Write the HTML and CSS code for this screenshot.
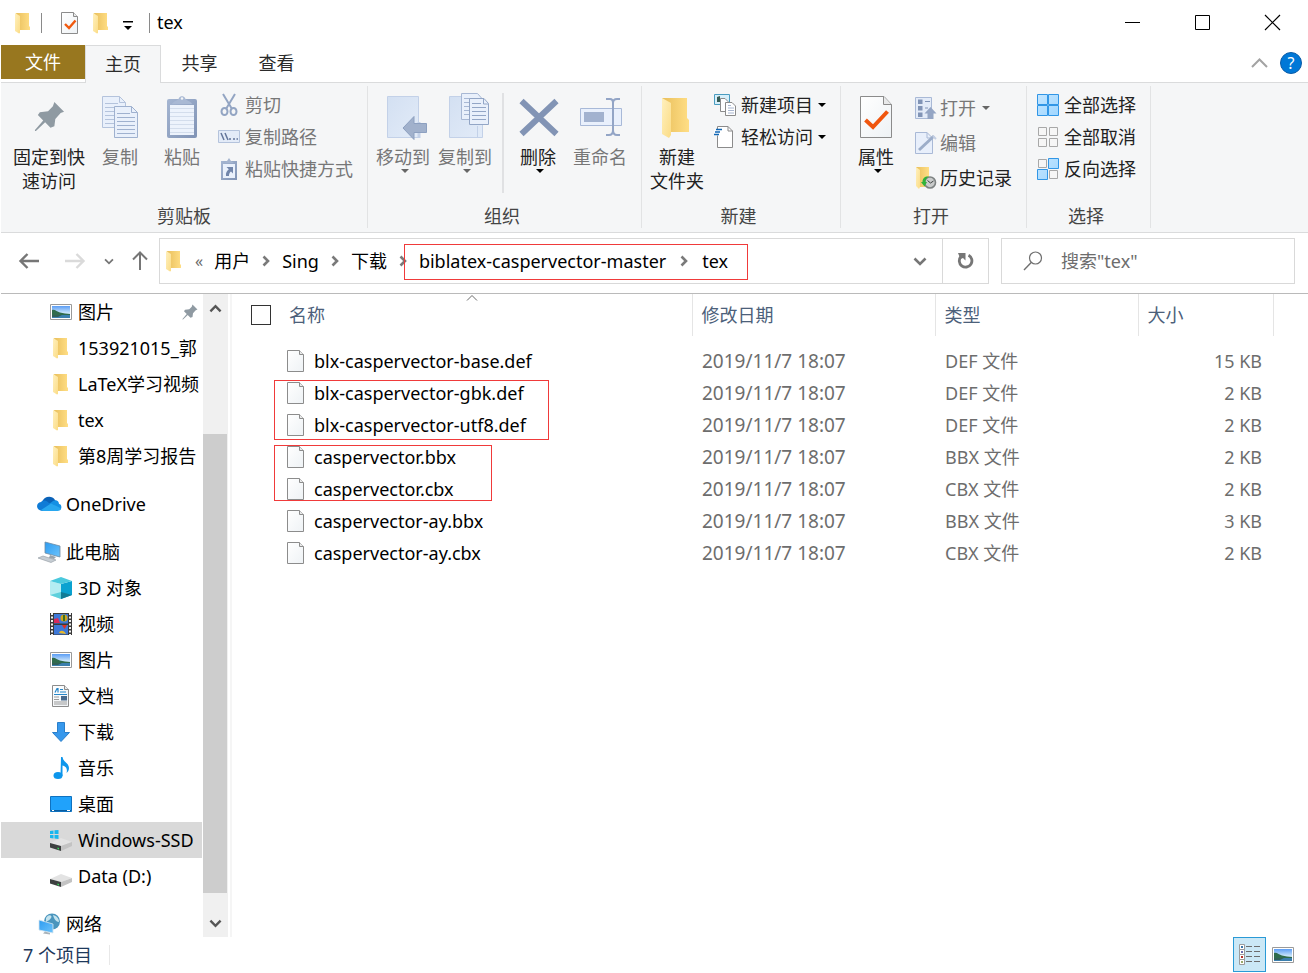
FILE: index.html
```
<!DOCTYPE html>
<html lang="zh-CN">
<head>
<meta charset="utf-8">
<meta name="viewport" content="width=device-width, initial-scale=1">
<title>tex</title>
<link rel="stylesheet" href="styles.css">
</head>
<body>
<svg class="defs" aria-hidden="true">
  <defs>
    <linearGradient id="g-fold" x1="0" y1="0" x2="1" y2="0"><stop offset="0" stop-color="#e9bf5c"/><stop offset="1" stop-color="#ffde85"/></linearGradient>
    <linearGradient id="g-flap" x1="0" y1="0" x2="1" y2="1"><stop offset="0" stop-color="#fff0bd"/><stop offset="1" stop-color="#fbdc86"/></linearGradient>
    <linearGradient id="g-sky" x1="0" y1="0" x2="0" y2="1"><stop offset="0" stop-color="#5b9df5"/><stop offset=".6" stop-color="#cfe8fb"/><stop offset="1" stop-color="#8fc0e0"/></linearGradient>
    <linearGradient id="g-page" x1="0" y1="0" x2="1" y2="1"><stop offset="0" stop-color="#ffffff"/><stop offset="1" stop-color="#eef2f5"/></linearGradient>
    <linearGradient id="g-clip" x1="0" y1="0" x2="1" y2="1"><stop offset="0" stop-color="#a5b6d2"/><stop offset="1" stop-color="#8093b5"/></linearGradient>
    <linearGradient id="g-blue" x1="0" y1="0" x2="1" y2="1"><stop offset="0" stop-color="#d3e0f2"/><stop offset="1" stop-color="#e2ebf8"/></linearGradient>
    <linearGradient id="g-tile" x1="0" y1="0" x2="1" y2="1"><stop offset="0" stop-color="#c4e6ff"/><stop offset="1" stop-color="#9fd6ff"/></linearGradient>
    <linearGradient id="g-screen" x1="0" y1="0" x2="1" y2="1"><stop offset="0" stop-color="#2d9bf0"/><stop offset="1" stop-color="#6cc3fb"/></linearGradient>
  </defs>
  <symbol id="folder" viewBox="0 0 15 22"><path d="M1 1H14V14L15 15V18H5Z" fill="url(#g-fold)"/><path d="M0 1 5 4V21L4 21.500 0 19Z" fill="url(#g-flap)"/></symbol>
  <symbol id="page" viewBox="0 0 18 22"><path d="M.5.500H12.500L16.500 4.500V21.500H.500Z" fill="url(#g-page)" stroke="#8c8c8c"/><path d="M12.500.500V4.500H16.500" fill="#e9eaea" stroke="#8c8c8c"/></symbol>
  <symbol id="picture" viewBox="0 0 22 16"><path d="M.5.500H21.500V15.500H.500Z" fill="#fff" stroke="#9a9a9a"/><path d="M2 2H20V14H2Z" fill="url(#g-sky)"/><path d="M2 6C5 5 7 8 10 8.500 13 9 17 10 20 10V11H2Z" fill="#2f6b4c"/><path d="M2 11H20V14H2Z" fill="#3b7fae"/><path d="M2 11H12L8 13H2Z" fill="#315f58"/></symbol>
  <symbol id="pin" viewBox="0 0 32 32"><path d="M21 1 31 11 27.500 12.500 22 18.500 21 26 17 27.500 11.500 22 2 31H1V30L9.500 20 4 14.500 6 11.500 14.500 10.500 19.500 5.500Z" fill="#8f9aa2"/></symbol>
  <symbol id="chev-down" viewBox="0 0 14 9"><path d="M1.500 1.500 7 7 12.500 1.500" fill="none" stroke="currentColor" stroke-width="2.600"/></symbol>
  <symbol id="chev-right" viewBox="0 0 8 12"><path d="M1.500 1.500 6 6 1.500 10.500" fill="none" stroke="currentColor" stroke-width="2.600"/></symbol>
  <symbol id="tri" viewBox="0 0 8 4"><path d="M0 0H8L4 4Z" fill="currentColor"/></symbol>
  <symbol id="drive" viewBox="0 0 22 13"><path d="M0 5 11 0 22 4 11 8Z" fill="#e3e3e3"/><path d="M0 5 11 8V13L0 9.500Z" fill="#3d4040"/><path d="M11 8 22 4V8L11 13Z" fill="#c3c3c3"/><path d="M7.500 9.500 9 10V11.500L7.500 11Z" fill="#37e05a"/></symbol>
</svg>

<header class="titlebar">
  <svg class="ic-folder" ><use href="#folder"/></svg>
  <span class="tb-sep"></span>
  <button class="plain tb-prop" aria-label="属性"><svg width="18" height="22"><use href="#page"/><path d="M4 12 8 16 14.500 8.500" fill="none" stroke="#f0590e" stroke-width="2.400"/></svg></button>
  <button class="plain tb-new" aria-label="新建文件夹"><svg class="ic-folder"><use href="#folder"/></svg></button>
  <button class="plain tb-menu" aria-label="自定义快速访问工具栏"><svg width="10" height="9" viewBox="0 0 10 9"><path d="M0 0H10V1.500H0ZM1 5H9L5 9Z"/></svg></button>
  <span class="tb-sep"></span>
  <h1 class="title">tex</h1>
  <div class="wincontrols">
    <button class="plain" aria-label="最小化"><svg width="15" height="15"><path d="M0 7.500H15" stroke="#000"/></svg></button>
    <button class="plain" aria-label="最大化"><svg width="15" height="15"><path d="M.5.500H14.500V14.500H.500Z" fill="none" stroke="#000"/></svg></button>
    <button class="plain" aria-label="关闭"><svg width="15" height="15"><path d="M0 0 15 15M15 0 0 15" stroke="#000" stroke-width="1.200"/></svg></button>
  </div>
</header>

<nav class="tabs">
  <button class="tab tab-file">文件</button>
  <button class="tab tab-on">主页</button>
  <button class="tab">共享</button>
  <button class="tab">查看</button>
  <div class="tabs-end">
    <button class="plain" aria-label="最小化功能区"><svg width="17" height="10" viewBox="0 0 17 10"><path d="M1 9 8.500 1.500 16 9" fill="none" stroke="#a3a3a3" stroke-width="2"/></svg></button>
    <button class="help" aria-label="帮助">?</button>
  </div>
</nav>

<section class="ribbon">
  <div class="group">
    <div class="group-body">
      <button class="big"><svg class="big-ic" viewBox="0 0 42 42"><use href="#pin" x="6" y="5" width="31" height="31"/></svg><span>固定到快<br>速访问</span></button>
      <button class="big off"><svg class="big-ic" viewBox="0 0 42 42"><g fill="#e9f0fb" stroke="#b4c3dc"><path d="M3.500.500H20.500L26.500 6.500V31.500H3.500Z"/><path d="M20.500.500V6.500H26.500M6 7.500H19M6 11.500H15M6 15.500H15M6 19.500H15M6 23.500H15M6 27.500H15" fill="none"/></g><g fill="#e9f0fb" stroke="#9fb1cf"><path d="M15.500 10.500H32.500L38.500 16.500V41.500H15.500Z"/><path d="M32.500 10.500V16.500H38.500M18 17.500H31M18 21.500H36M18 25.500H36M18 29.500H36M18 33.500H36M18 37.500H36" fill="none"/></g></svg><span>复制</span></button>
      <button class="big off"><svg class="big-ic" viewBox="0 0 42 42"><rect x="6" y="3" width="30" height="39" rx="2" fill="url(#g-clip)"/><path d="M9 9H33V39H9Z" fill="#edf3fc"/><path d="M9 12.500H33M9 16.500H33M9 20.500H33M9 24.500H33M9 28.500H33M9 32.500H33M9 36.500H33" stroke="#d3ddec"/><path d="M11 8C12 5 17 5 18 2 19-.500 23-.500 24 2 25 5 30 5 31 8Z" fill="#a9b9d4"/><circle cx="21" cy="2.500" r="1.200" fill="#f5f6f7"/></svg><span>粘贴</span></button>
      <div class="smalls">
        <button class="small off"><svg class="ic" viewBox="0 0 22 22"><g fill="none" stroke="#93a5c3"><path d="M5 0 14 15M17 0 8 15" stroke-width="2"/><ellipse cx="6.500" cy="17.500" rx="3" ry="3.500" stroke-width="2"/><ellipse cx="15.500" cy="17.500" rx="3" ry="3.500" stroke-width="2"/></g></svg>剪切</button>
        <button class="small off"><svg class="ic" viewBox="0 0 22 22"><path d="M.5 4.500H21.500V16.500H.500Z" fill="#e3ebf8" stroke="#b4c3dc"/><path d="M3 7 6 14M7 7 10 14M11 13H13M15 13H17M18.500 13H20" stroke="#63759a" stroke-width="1.500"/></svg>复制路径</button>
        <button class="small off"><svg class="ic" viewBox="0 0 22 22"><path d="M3 3H19V22H3Z" fill="url(#g-clip)"/><path d="M5 6H17V20H5Z" fill="#eaf1fc"/><path d="M6 5 9 3 11 0 13 3 16 5Z" fill="#a5b5d0"/><path d="M8.500 9H15V15.500L13 13.500C11.500 14.500 11 16 11 18H8C7.500 15 9 12.500 10.800 11.300Z" fill="#7286ab"/></svg>粘贴快捷方式</button>
      </div>
    </div>
    <div class="group-name">剪贴板</div>
  </div>

  <div class="group g-org">
    <div class="group-body">
      <button class="big off"><svg class="big-ic" viewBox="0 0 42 42"><path d="M5.500.500H36.500V41.500H5.500Z" fill="url(#g-blue)" stroke="#c3d1e8"/><path d="M37 26V42" stroke="#c3d1e8" stroke-width="3"/><path d="M21 32 32 20.500V27.500H44.500V36.500H32V43.500Z" fill="#a1b1cc" stroke="#8da0c0"/></svg><span>移动到</span><svg class="tri"><use href="#tri"/></svg></button>
      <button class="big off"><svg class="big-ic" viewBox="0 0 42 42"><path d="M5.500.500H33.500L38.500 29V41.500H5.500Z" fill="url(#g-blue)" stroke="#c3d1e8"/><path d="M33.500 30V41.500" stroke="#c3d1e8"/><g fill="#e9f0fb" stroke="#a8b8d4"><path d="M17.500-2.500H33.500L37.500 2V23.500H17.500Z"/><path d="M20 2.500H31M20 6.500H25M20 10.500H25M20 14.500H25M20 18.500H25"/><path d="M25.500 2.500H40L44.500 7.500V28.500H25.500Z" stroke="#93a6c6"/><path d="M39.500 3V8H44.500M28 7.500H37M28 11.500H42M28 15.500H42M28 19.500H42M28 23.500H42" fill="none" stroke="#93a6c6"/></g></svg><span>复制到</span><svg class="tri"><use href="#tri"/></svg></button>
      <span class="inner-sep"></span>
      <button class="big"><svg class="big-ic" viewBox="0 0 42 42"><path d="M4.500 5 39.500 38M39.500 5 4.500 38" stroke="#8294b5" stroke-width="6"/></svg><span>删除</span><svg class="tri"><use href="#tri"/></svg></button>
      <button class="big off"><svg class="big-ic" viewBox="0 0 42 42"><path d="M1.500 12.500H42.500V29.500H1.500Z" fill="#e9f0fc" stroke="#a8b9d8"/><path d="M5 16H25V26H5Z" fill="#a2b2cf"/><path d="M27 3H31C33 3 34 5 34 7V34C34 37 33 39 30 39H27M41 3H38C35 3 34 5 34 7M34 34C34 37 35 39 38 39H41" fill="none" stroke="#93a5c6" stroke-width="2"/></svg><span>重命名</span></button>
    </div>
    <div class="group-name">组织</div>
  </div>

  <div class="group g-new">
    <div class="group-body">
      <button class="big"><svg class="big-ic" viewBox="0 0 42 42"><path d="M6 2H31V22L33 24V36H15Z" fill="url(#g-fold)"/><path d="M6 2 15 7V39L13 42 6 38Z" fill="url(#g-flap)"/></svg><span>新建<br>文件夹</span></button>
      <div class="smalls">
        <button class="small"><svg class="ic" viewBox="0 0 22 22"><path d="M.5.500H15.500V10.500H.500Z" fill="#d7effa" stroke="#4a9cc0"/><path d="M3 3 6 2V8H3Z" fill="#355b54"/><path d="M6.500 4.500H11L14 7.500V17.500H6.500Z" fill="#fff" stroke="#8b8b8b"/><path d="M11.500 8.500H18L21.500 12V21.500H11.500Z" fill="#fff" stroke="#8b8b8b"/><path d="M14 11.500H17M14 14H20M14 16.500H20M14 19H20" stroke="#a9b6d0"/></svg>新建项目<svg class="tri"><use href="#tri"/></svg></button>
        <button class="small"><svg class="ic" viewBox="0 0 22 22"><path d="M3.500.500H14L18.500 5V21.500H3.500Z" fill="#fff" stroke="#8b8b8b"/><path d="M14 .500V5H18.500" fill="none" stroke="#8b8b8b"/><path d="M0 3.500H7V9.500H0Z" fill="#fff"/><path d="M2 3.500H8M1 6H6M0 8.500H5" stroke="#1267b5" stroke-width="1.500"/></svg>轻松访问<svg class="tri"><use href="#tri"/></svg></button>
      </div>
    </div>
    <div class="group-name">新建</div>
  </div>

  <div class="group g-open">
    <div class="group-body">
      <button class="big"><svg class="big-ic" viewBox="0 0 42 42"><path d="M5.500.500H29L36.500 8.500V41.500H5.500Z" fill="url(#g-page)" stroke="#8b8b8b"/><path d="M28.500.500V8.500H36.500" fill="#e8e9ea" stroke="#8b8b8b"/><path d="M10.500 24 18 31 32.500 15.500" fill="none" stroke="#f0560f" stroke-width="4"/></svg><span>属性</span><svg class="tri"><use href="#tri"/></svg></button>
      <div class="smalls">
        <button class="small off"><svg class="ic" viewBox="0 0 22 22"><path d="M.5.500H16.500V21.500H.500Z" fill="#e3ebf8" stroke="#a9b9d6"/><path d="M3 2.500H7.500V7H3ZM3 9H7.500V13.500H3ZM3 15.500H7.500V20H3Z" fill="#8194b6"/><path d="M10 4.500H15M10 11H13" stroke="#8194b6"/><path d="M15.500 10 21.500 16.500H18.500V22H12.500V16.500H9.500Z" fill="#94a5c4"/></svg>打开<svg class="tri"><use href="#tri"/></svg></button>
        <button class="small off"><svg class="ic" viewBox="0 0 22 22"><path d="M.5.500H12L17.500 6V21.500H.500Z" fill="#e8effb" stroke="#a9b9d6"/><path d="M12 .500V6H17" fill="none" stroke="#a9b9d6"/><path d="M4 18 19 4" stroke="#9cadc9" stroke-width="3"/><path d="M18 4 21 7" stroke="#c4cfe2" stroke-width="2"/></svg>编辑</button>
        <button class="small"><svg class="ic" viewBox="0 0 22 22"><path d="M1 0H14V20H4Z" fill="url(#g-fold)"/><path d="M1 0 5 3V20L4 22 1 19Z" fill="url(#g-flap)"/><circle cx="15" cy="15.500" r="5.500" fill="#c9cbcb" stroke="#7d8282" stroke-width="1.600"/><path d="M12.500 13.500 15.500 16 18.500 14" fill="none" stroke="#3e4343"/><path d="M6 15 9.500 19.500 12 15H10.500C10.500 12 12 10.500 14 9.500 10 9 7.500 11 7.500 15Z" fill="#2fb33a"/></svg>历史记录</button>
      </div>
    </div>
    <div class="group-name">打开</div>
  </div>

  <div class="group g-select">
    <div class="group-body">
      <div class="smalls">
        <button class="small"><svg class="ic" viewBox="0 0 22 22"><path d="M.5.500H10.500V10.500H.500ZM11.500.500H21.500V10.500H11.500ZM.5 11.500H10.500V21.500H.500ZM11.500 11.500H21.500V21.500H11.500Z" fill="url(#g-tile)" stroke="#3196e6"/></svg>全部选择</button>
        <button class="small"><svg class="ic" viewBox="0 0 22 22"><path d="M1.500 1.500H9.500V9.500H1.500ZM12.500 1.500H20.500V9.500H12.500ZM1.500 12.500H9.500V20.500H1.500ZM12.500 12.500H20.500V20.500H12.500Z" fill="#f6f6f6" stroke="#a8a8a8"/></svg>全部取消</button>
        <button class="small"><svg class="ic" viewBox="0 0 22 22"><path d="M1.500 1.500H9.500V9.500H1.500ZM12.500 12.500H20.500V20.500H12.500Z" fill="#f6f6f6" stroke="#a8a8a8"/><path d="M11.500.500H21.500V10.500H11.500ZM.5 11.500H10.500V21.500H.500Z" fill="url(#g-tile)" stroke="#3196e6"/></svg>反向选择</button>
      </div>
    </div>
    <div class="group-name">选择</div>
  </div>
</section>

<section class="addressbar">
  <div class="navbtns">
    <button class="plain" aria-label="后退"><svg width="20" height="16"><path d="M1 8H20M8.500 1 1.500 8 8.500 15" fill="none" stroke="#767676" stroke-width="2.400"/></svg></button>
    <button class="plain" aria-label="前进"><svg width="20" height="16"><path d="M0 8H19M11.500 1 18.500 8 11.500 15" fill="none" stroke="#dadada" stroke-width="2.400"/></svg></button>
    <button class="plain nav-recent" aria-label="最近浏览的位置"><svg width="10" height="7"><use href="#chev-down"/></svg></button>
    <button class="plain" aria-label="上移"><svg width="16" height="20"><path d="M8 1V19M1 8.500 8 1.500 15 8.500" fill="none" stroke="#767676" stroke-width="2"/></svg></button>
  </div>
  <div class="path">
    <svg class="ic-folder"><use href="#folder"/></svg>
    <span class="more">«</span>
    <button class="plain crumb">用户</button>
    <svg class="cr"><use href="#chev-right"/></svg>
    <button class="plain crumb">Sing</button>
    <svg class="cr"><use href="#chev-right"/></svg>
    <button class="plain crumb">下载</button>
    <svg class="cr"><use href="#chev-right"/></svg>
    <span class="marked-path">
      <button class="plain crumb">biblatex-caspervector-master</button>
      <svg class="cr"><use href="#chev-right"/></svg>
      <button class="plain crumb">tex</button>
    </span>
    <button class="plain path-drop" aria-label="以前的位置"><svg width="14" height="9"><use href="#chev-down"/></svg></button>
    <button class="plain path-refresh" aria-label="刷新"><svg width="18" height="18" viewBox="0 0 18 18"><path d="M11.500 3.200A6.300 6.300 0 1 1 4 4.500" fill="none" stroke="#767676" stroke-width="2.800"/><path d="M1 1H8.500V8.500L6 6 3.500 7Z" fill="#767676"/></svg></button>
  </div>
  <label class="search">
    <svg width="20" height="20" viewBox="0 0 20 20"><circle cx="12.500" cy="7" r="6" fill="none" stroke="#6f6f6f" stroke-width="1.200"/><path d="M8.200 11.500 1 19" stroke="#6f6f6f" stroke-width="1.400"/></svg>
    <input type="text" placeholder='搜索"tex"' aria-label="搜索">
  </label>
</section>

<main class="content">
  <nav class="tree">
    <ul>
      <li><a href="#"><svg class="ic" viewBox="0 0 22 22"><use href="#picture" y="3" width="22" height="16"/></svg>图片<svg class="pinned"><use href="#pin"/></svg></a></li>
      <li><a href="#"><svg class="ic" viewBox="0 0 22 22"><use href="#folder" x="3" width="15" height="22"/></svg>153921015_郭</a></li>
      <li><a href="#"><svg class="ic" viewBox="0 0 22 22"><use href="#folder" x="3" width="15" height="22"/></svg>LaTeX学习视频</a></li>
      <li><a href="#"><svg class="ic" viewBox="0 0 22 22"><use href="#folder" x="3" width="15" height="22"/></svg>tex</a></li>
      <li><a href="#"><svg class="ic" viewBox="0 0 22 22"><use href="#folder" x="3" width="15" height="22"/></svg>第8周学习报告</a></li>
      <li class="root"><a href="#"><svg class="ic" viewBox="0 0 22 22"><path d="M4 9C6 3 14 2 17 7L20 12 8 17Z" fill="#0a62b8"/><path d="M5 18C-2 18-3 10 3 9 6 6 9 8 11 10L18 14 14 18Z" fill="#0f7bd6"/><path d="M15 8C18 6 21 8 21 11 24 11 24 16 22 17L11 11Z" fill="#1490e4"/><path d="M3 17 13 10.500C15 12 22 14 23 16 22 18 20 18 18 18H5Z" fill="#28a7ef"/></svg>OneDrive</a></li>
      <li class="root"><a href="#"><svg class="ic" viewBox="0 0 22 22"><path d="M7 1 22 5V16L7 12Z" fill="url(#g-screen)" stroke="#6f8aa2" stroke-width=".8"/><path d="M12 14 18 16 16 18 11 17Z" fill="#9aa4ac"/><path d="M0 17 5 15 18 19 13 21.500Z" fill="#c6cdd3" stroke="#8e979f" stroke-width=".6"/></svg>此电脑</a></li>
      <li><a href="#"><svg class="ic" viewBox="0 0 22 22"><path d="M0 4 11 7V22L0 18Z" fill="#b5edf2"/><path d="M11 7 22 4V18L11 22Z" fill="#0aa2d0"/><path d="M0 4 11 0 22 4 11 7Z" fill="#4ac9dd"/><path d="M0 18 11 15V22Z" fill="#5ed0dc"/><path d="M11 15 22 18 11 22Z" fill="#117c95"/></svg>3D 对象</a></li>
      <li><a href="#"><svg class="ic" viewBox="0 0 22 22"><path d="M0 0H22V22H0Z" fill="#3a3a3a"/><path d="M4 1H18V10.500H4ZM4 12H18V21.500H4Z" fill="#3d78d8"/><path d="M2 0V22M20 0V22" stroke="#f2f2f2" stroke-width="2" stroke-dasharray="2 1.500"/><circle cx="14" cy="5" r="3.500" fill="#d2a51b"/><path d="M13 2H15V8H13Z" fill="#396f28"/><path d="M4 6 8 5 10 10H4Z" fill="#d62b5d"/><path d="M12 12H17L14.500 16Z" fill="#df3023"/><path d="M9 20C10 17 14 17 16 21Z" fill="#e8b82a"/></svg>视频</a></li>
      <li><a href="#"><svg class="ic" viewBox="0 0 22 22"><use href="#picture" y="3" width="22" height="16"/></svg>图片</a></li>
      <li><a href="#"><svg class="ic" viewBox="0 0 22 22"><use href="#page" x="2" width="18" height="22"/><path d="M5 7.500 7 3.500H8L8 7.500M10 4.500H13M10 7H16M4 9.500H17" fill="none" stroke="#2787c9" stroke-width="1.200"/><path d="M4 12H9M4 14.500H9M4 17H17M4 19H17" stroke="#9b9b9b"/><path d="M11 11H17V15.500H11Z" fill="#47698c"/></svg>文档</a></li>
      <li><a href="#"><svg class="ic" viewBox="0 0 22 22"><path d="M7.500 1.500H14.500V11.500H19.500L11 20.500 2.500 11.500H7.500Z" fill="#3798ec" stroke="#2a7fcb"/></svg>下载</a></li>
      <li><a href="#"><svg class="ic" viewBox="0 0 22 22"><ellipse cx="8" cy="18.500" rx="4.500" ry="3.500" fill="#0d96ec"/><path d="M11 0H12.500C13 5 19 6 19 11 19 13 18 15 16.500 16 18 11 15 9 12.500 8.500V19H10.500Z" fill="#0d96ec"/></svg>音乐</a></li>
      <li><a href="#"><svg class="ic" viewBox="0 0 22 22"><path d="M.5 3.500H21.500V18.500H.500Z" fill="#20a2fb" stroke="#0f72c0"/><path d="M1 17.500H21" stroke="#0b5c9e"/><path d="M2 17.500H4M17 17.500H20" stroke="#fff"/></svg>桌面</a></li>
      <li><a href="#" aria-current="true"><svg class="ic" viewBox="0 0 22 22"><use href="#drive" y="9" width="22" height="13"/><path d="M0 2 3.500 1.500V5H0ZM4.500 1.300 8.500 1V5H4.500ZM0 6H3.500V9.500L0 9ZM4.500 6H8.500V10L4.500 9.500Z" fill="#17b6ee"/></svg>Windows-SSD</a></li>
      <li><a href="#"><svg class="ic" viewBox="0 0 22 22"><use href="#drive" y="9" width="22" height="13"/></svg>Data (D:)</a></li>
      <li class="root"><a href="#"><svg class="ic" viewBox="0 0 22 22"><circle cx="14" cy="8.500" r="8" fill="#4a95bd"/><path d="M8 5C11 0 15 3 13 5 11 8 9 8 8 9ZM15 2C19 3 21 6 21 9 18 9 16 6 15 2Z" fill="#c4e3ee"/><path d="M1 7 15 11V20L1 17Z" fill="url(#g-screen)" stroke="#d5e5ef" stroke-width=".8"/><path d="M7 18.500 12 20V21.500L5 20.500Z" fill="#aab4bb"/></svg>网络</a></li>
    </ul>
  </nav>
  <div class="scroll">
    <button class="plain" aria-label="向上滚动"><svg width="13" height="9" viewBox="0 0 14 9"><path d="M1.500 7.500 7 2 12.500 7.500" fill="none" stroke="currentColor" stroke-width="2.600"/></svg></button>
    <div class="track"><div class="thumb"></div></div>
    <button class="plain" aria-label="向下滚动"><svg width="13" height="9"><use href="#chev-down"/></svg></button>
  </div>
  <section class="files">
    <table>
      <colgroup><col class="c-name"><col class="c-date"><col class="c-type"><col class="c-size"><col></colgroup>
      <thead>
        <tr>
          <th><span class="name-head"><input type="checkbox" aria-label="全选">名称</span><svg class="sort" width="12" height="6" viewBox="0 0 12 6"><path d="M1 5.500 6 .500 11 5.500" fill="none" stroke="#6a6a6a"/></svg></th>
          <th>修改日期</th><th>类型</th><th>大小</th><td></td>
        </tr>
      </thead>
      <tbody>
        <tr><td><span class="fname"><svg class="ic-page"><use href="#page"/></svg>blx-caspervector-base.def</span></td><td>2019/11/7 18:07</td><td>DEF 文件</td><td>15 KB</td><td></td></tr>
        <tr><td><span class="fname"><svg class="ic-page"><use href="#page"/></svg>blx-caspervector-gbk.def</span></td><td>2019/11/7 18:07</td><td>DEF 文件</td><td>2 KB</td><td></td></tr>
        <tr><td><span class="fname"><svg class="ic-page"><use href="#page"/></svg>blx-caspervector-utf8.def</span></td><td>2019/11/7 18:07</td><td>DEF 文件</td><td>2 KB</td><td></td></tr>
        <tr><td><span class="fname"><svg class="ic-page"><use href="#page"/></svg>caspervector.bbx</span></td><td>2019/11/7 18:07</td><td>BBX 文件</td><td>2 KB</td><td></td></tr>
        <tr><td><span class="fname"><svg class="ic-page"><use href="#page"/></svg>caspervector.cbx</span></td><td>2019/11/7 18:07</td><td>CBX 文件</td><td>2 KB</td><td></td></tr>
        <tr><td><span class="fname"><svg class="ic-page"><use href="#page"/></svg>caspervector-ay.bbx</span></td><td>2019/11/7 18:07</td><td>BBX 文件</td><td>3 KB</td><td></td></tr>
        <tr><td><span class="fname"><svg class="ic-page"><use href="#page"/></svg>caspervector-ay.cbx</span></td><td>2019/11/7 18:07</td><td>CBX 文件</td><td>2 KB</td><td></td></tr>
      </tbody>
    </table>
    <div class="mark mark-def"></div>
    <div class="mark mark-bx"></div>
  </section>
</main>

<footer class="status">
  <span class="count">7 个项目</span>
  <div class="views">
    <button class="view view-on" aria-label="详细信息"><svg width="22" height="22" viewBox="0 0 22 22"><path d="M.5.500H5.500V5.500H.500ZM.5 5.500H5.500V10.500H.500ZM.5 10.500H5.500V15.500H.500ZM.5 15.500H5.500V20.500H.500Z" fill="#fff" stroke="#9b9b9b"/><path d="M2 2H4V4H2Z" fill="#3a76a8"/><path d="M2 7H4V9H2Z" fill="#6b6fb0"/><path d="M2 12H4V14H2Z" fill="#b8302a"/><path d="M2 17H4V19H2Z" fill="#9bab6a"/><path d="M7 2.500H13M15 2.500H21M7 7.500H13M15 7.500H21M7 12.500H13M15 12.500H21M7 17.500H13M15 17.500H21" stroke="#6d6d6d"/></svg></button>
    <button class="view" aria-label="大缩略图"><svg width="22" height="16"><use href="#picture"/></svg></button>
  </div>
</footer>
</body>
</html>
```
FILE: styles.css
```
* { box-sizing: border-box; }

html, body { height: 100%; }

body {
  margin: 0;
  display: flex;
  flex-direction: column;
  padding-left: 1px;
  background: #fff;
  color: #000;
  font: 18px/24px "Noto Sans", "Noto Sans CJK SC", sans-serif;
  overflow: hidden;
}

button, input { font: inherit; color: inherit; }
button, a { white-space: nowrap; }
svg { display: block; flex: none; overflow: visible; }
.defs { position: absolute; width: 0; height: 0; }

.plain {
  display: flex;
  align-items: center;
  justify-content: center;
  padding: 0;
  border: 0;
  background: none;
}

.ic { width: 22px; height: 22px; }
.ic-folder { width: 15px; height: 22px; }
.ic-page { width: 18px; height: 22px; }

/* Title bar */
.titlebar {
  display: flex;
  align-items: center;
  flex: none;
  height: 45px;
  padding: 0 1px 0 14px;
}
.tb-sep { width: 1px; height: 20px; margin-left: 11px; background: #8a8a8a; }
.tb-prop { margin-left: 19px; }
.tb-new { margin-left: 14px; }
.tb-menu { margin: 6px 5px 0 15px; }
.title { margin: 0 0 2px 7px; font-size: 18px; font-weight: 400; }
.wincontrols { display: flex; margin-left: auto; }
.wincontrols .plain { width: 70px; height: 44px; }

/* Tabs */
.tabs {
  display: flex;
  flex: none;
  height: 38px;
  border-bottom: 1px solid #dadbdc;
}
.tab {
  width: 77px;
  height: 36px;
  padding: 0;
  border: 0;
  background: none;
  color: #2b2b2b;
}
.tab-file { width: 84px; height: 34px; background: #98771f; color: #fff; }
.tab-on {
  width: 76px;
  height: 38px;
  padding-bottom: 2px;
  border: 1px solid #dadbdc;
  border-bottom: 0;
  background: #f5f6f7;
}
.tabs-end {
  display: flex;
  align-items: center;
  gap: 12px;
  margin-left: auto;
  padding: 0 6px 1px 0;
}
.help {
  width: 22px;
  height: 22px;
  padding: 0;
  border: 1px solid #0a5ca8;
  border-radius: 50%;
  background: #0078d7;
  color: #fff;
  font-size: 16px;
  line-height: 20px;
}

/* Ribbon */
.ribbon {
  display: flex;
  flex: none;
  height: 150px;
  padding: 3px 0 4px;
  border-bottom: 1px solid #dadbdc;
  background: #f5f6f7;
}
.group {
  display: flex;
  flex-direction: column;
  border-right: 1px solid #e2e3e4;
}
.group-body {
  display: flex;
  flex: 1;
  align-items: flex-start;
  padding: 0 14px 0 8px;
}
.g-org .group-body { padding: 0 10px 0 4px; }
.g-new .group-body, .g-open .group-body { padding-left: 4px; }
.g-select .group-body { padding-left: 5px; }
.group-name { text-align: center; color: #444; }
.group + .group .group-name { padding-right: 5px; }

.big {
  display: flex;
  flex-direction: column;
  align-items: center;
  min-width: 62px;
  padding: 10px 4px 0;
  border: 0;
  background: none;
  color: #222;
}
.big-ic { width: 42px; height: 42px; margin-bottom: 7px; }
.tri { width: 8px; height: 4px; color: #000; }
.big .tri { margin-left: 4px; }
.off { color: #777; }
.off .tri { color: #666; }

.smalls { display: flex; flex-direction: column; padding: 3px 0 0 5px; }
.small {
  display: flex;
  align-items: center;
  gap: 5px;
  height: 32px;
  padding: 0;
  border: 0;
  background: none;
  color: #222;
}
.small.off { color: #777; }
.g-new .smalls { padding-left: 6px; }
.g-open .smalls { padding: 4px 0 0 8px; }
.g-open .small { gap: 3px; height: 35px; }
.g-open .small .tri { margin-left: 3px; }

.inner-sep { width: 2px; height: 100px; margin: 7px 3px 0 6px; background: #e0e1e3; }

/* Address bar */
.addressbar {
  display: flex;
  align-items: center;
  flex: none;
  height: 61px;
  padding: 0 13px 4px 18px;
  border-bottom: 1px solid #bababa;
}
.navbtns { display: flex; align-items: center; gap: 18px; padding-right: 9px; }
.navbtns .plain { min-width: 20px; height: 44px; }
.navbtns .plain:first-child { margin-right: 8px; }
.navbtns .nav-recent { min-width: 12px; margin-right: -3px; color: #767676; }
.path, .search { display: flex; align-items: center; height: 46px; border: 1px solid #d9d9d9; }
.path { flex: 1; padding-left: 6px; }
.more { margin: 0 11px 0 14px; color: #6a6a6a; font-size: 16px; }
.cr { width: 8px; height: 12px; margin: 0 12px; color: #7a7a7a; }
.marked-path { position: relative; display: flex; align-items: center; gap: 2px; }
.marked-path::after {
  content: "";
  position: absolute;
  inset: -5px -20px -7px -15px;
  border: 1px solid #f03a3a;
  pointer-events: none;
}
.path-drop { width: 44px; height: 44px; margin-left: auto; color: #767676; }
.path-refresh { width: 46px; height: 44px; border-left: 1px solid #d9d9d9; }
.search { width: 294px; min-width: 0; margin-left: 12px; padding-left: 21px; }
.search input {
  flex: 1 1 0;
  width: 0;
  min-width: 0;
  margin-left: 18px;
  padding: 0;
  border: 0;
  outline: 0;
  background: none;
}
.search input::placeholder { color: #6d6d6d; opacity: 1; }

/* Navigation tree */
.content { display: flex; flex: 1; min-height: 0; }
.tree { flex: none; width: 201px; overflow: hidden; }
.tree ul { margin: 0; padding: 0; list-style: none; }
.tree a {
  display: flex;
  align-items: center;
  gap: 6px;
  height: 36px;
  padding: 0 10px 0 49px;
  color: #000;
  text-decoration: none;
}
.tree .root a { padding-left: 37px; }
.tree .root { margin-top: 12px; }
.tree a[aria-current] { background: #d9d9d9; }
.pinned { width: 16px; height: 16px; margin: 0 -6px 0 auto; }

.scroll {
  display: flex;
  flex-direction: column;
  flex: none;
  width: 25px;
  margin-left: 1px;
  background: #f0f0f0;
  color: #555;
}
.scroll .plain { height: 28px; }
.track { flex: 1; padding: 112px 1px 16px 0; }
.thumb { height: 100%; background: #cdcdcd; }

/* File list */
.files {
  position: relative;
  flex: 1;
  margin-left: 2px;
  border-left: 2px solid #f5f5f5;
}
.files table { width: 100%; border-collapse: collapse; table-layout: fixed; }
.c-name { width: 460px; }
.c-date { width: 243px; }
.c-type { width: 203px; }
.c-size { width: 135px; }
.files th {
  position: relative;
  height: 42px;
  padding: 0 9px 1px;
  border-right: 1px solid #e5e5e5;
  color: #4c607a;
  font-weight: 400;
  text-align: left;
}
.name-head { display: flex; align-items: center; gap: 18px; padding-left: 10px; }
.name-head input {
  appearance: none;
  width: 20px;
  height: 20px;
  margin: 0;
  border: 1px solid #333;
  background: #fff;
}
.sort { position: absolute; top: 1px; left: 51%; }
.files tbody::before { content: ""; display: block; height: 9px; }
.files tbody td { height: 32px; padding: 0 10px; color: #6d6d6d; }
.files tbody td:nth-child(2) { font-size: 19px; }
.files tbody td:nth-child(4) { padding-right: 11px; text-align: right; }
.fname { display: flex; align-items: center; gap: 9px; padding-left: 45px; color: #000; }
.mark { position: absolute; left: 42px; border: 1px solid #f03a3a; pointer-events: none; }
.mark-def { top: 86px; width: 275px; height: 60px; }
.mark-bx { top: 151px; width: 218px; height: 56px; }

/* Status bar */
.status {
  display: flex;
  align-items: center;
  flex: none;
  height: 36px;
  padding: 0 9px 1px 22px;
  color: #1e395b;
}
.count { padding-right: 17px; border-right: 1px solid #e8e8e8; line-height: 20px; }
.views { display: flex; margin-left: auto; }
.view {
  display: flex;
  align-items: center;
  justify-content: center;
  width: 33px;
  height: 35px;
  padding: 0;
  border: 1px solid transparent;
  background: none;
}
.view-on { border-color: #2a9ad6; background: #cbe8f6; }
```
